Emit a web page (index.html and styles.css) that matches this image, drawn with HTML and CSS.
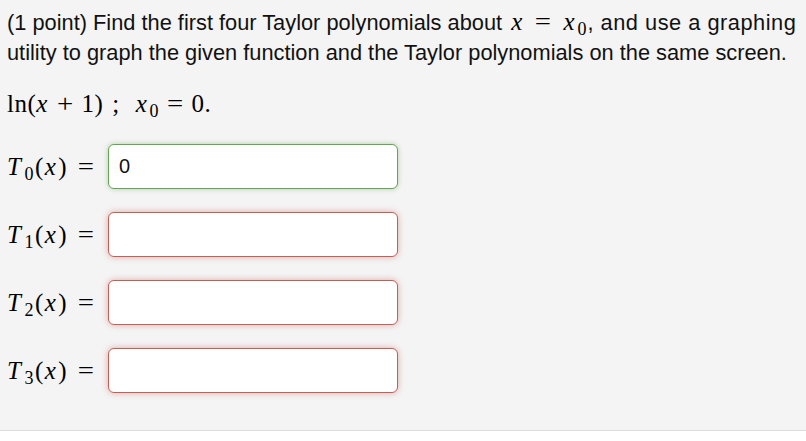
FILE: index.html
```html
<!DOCTYPE html>
<html>
<head>
<meta charset="utf-8">
<link rel="stylesheet" href="styles.css">
</head>
<body>
<div class="problem">
  <p class="intro">(1 point) Find the first four Taylor polynomials about <span class="m inl"><i>x</i><span class="rel">=</span><i>x</i><sub>0</sub></span><span class="tail">, and use a graphing</span> utility to graph the given function and the Taylor polynomials on the same screen.</p>
  <p class="given m">ln(<i>x</i><span class="bin">+</span>1)<span class="semi">;</span><i>x</i><sub>0</sub><span class="rel">=</span>0.</p>
  <div class="rows">
    <div class="row">
      <span class="label m"><i>T</i><sub>0</sub>(<i>x</i>)<span class="rel">=</span></span>
      <div class="field ok">0</div>
    </div>
    <div class="row">
      <span class="label m"><i>T</i><sub>1</sub>(<i>x</i>)<span class="rel">=</span></span>
      <div class="field bad"></div>
    </div>
    <div class="row">
      <span class="label m"><i>T</i><sub>2</sub>(<i>x</i>)<span class="rel">=</span></span>
      <div class="field bad"></div>
    </div>
    <div class="row">
      <span class="label m"><i>T</i><sub>3</sub>(<i>x</i>)<span class="rel">=</span></span>
      <div class="field bad"></div>
    </div>
  </div>
</div>
</body>
</html>
```
FILE: styles.css
```css
html, body {
  margin: 0;
  padding: 0;
  background: #ffffff;
}
.problem {
  background: #f4f4f4;
  height: 431px;
  box-sizing: border-box;
  border-bottom: 1px solid #dedede;
  padding: 7px 4px 0 7px;
  font-family: "Liberation Sans", Arial, sans-serif;
  font-size: 21.8px;
  color: #111;
}
.intro {
  margin: 0;
  line-height: 30px;
}
.m {
  font-family: "Liberation Serif", "Times New Roman", serif;
  font-size: 25px;
  color: #000;
}
.inl {
  margin-left: 3px;
  letter-spacing: 1px;
}
.inl .rel {
  margin: 0 12px;
}
.tail {
  letter-spacing: 0.5px;
}
.m i {
  font-style: italic;
  margin-right: 1px;
}
.m sub {
  font-size: 18px;
  vertical-align: -5px;
  line-height: 0;
  font-style: normal;
  margin-left: 1px;
}
.rel {
  display: inline-block;
  margin: 0 9px;
  transform: scaleX(1.15);
}
.bin {
  display: inline-block;
  margin: 0 9px;
  transform: scaleX(1.15);
}
.semi {
  margin: 0 16px 0 9px;
}
.given {
  margin: 21px 0 0 0;
  line-height: 30px;
  letter-spacing: 0.5px;
}
.rows {
  display: flex;
  flex-direction: column;
  gap: 23px;
  margin-top: 25px;
}
.row {
  display: flex;
  align-items: center;
}
.label {
  width: 101px;
  white-space: nowrap;
  letter-spacing: 1.5px;
}
.label .rel {
  margin: 0 10px 0 11px;
}
.field {
  width: 290px;
  height: 45px;
  box-sizing: border-box;
  background: #fff;
  border-radius: 6px;
  font-family: "Liberation Sans", Arial, sans-serif;
  font-size: 20px;
  line-height: 43px;
  padding-left: 10px;
  color: #111;
}
.ok {
  border: 1px solid #66a356;
  box-shadow: 0 0 5px rgba(90, 160, 70, 0.45);
}
.bad {
  border: 1px solid #c65e58;
  box-shadow: 0 0 6px rgba(200, 80, 70, 0.45);
}
```
